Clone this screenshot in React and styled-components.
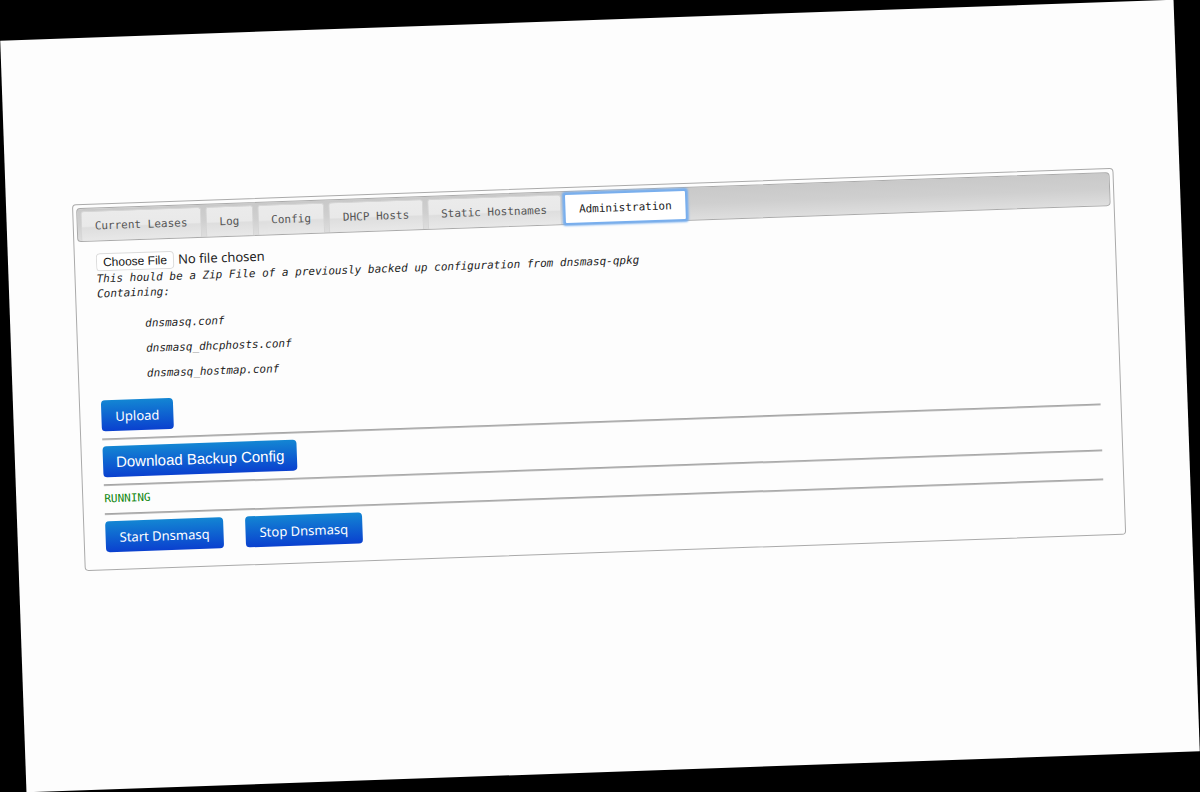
import React, { useState } from "react";
import styled, { createGlobalStyle, css } from "styled-components";

const mono = `"DejaVu Sans Mono", "Liberation Mono", monospace`;

const GlobalStyle = createGlobalStyle`
  * { box-sizing: border-box; }
  body {
    margin: 0;
    background: #000;
    overflow: hidden;
  }
`;

const Backdrop = styled.div`
  display: flex;
  min-height: 100vh;
  padding: 20px 13px;
  background: #000;
`;

const Sheet = styled.main`
  flex: 1;
  min-width: 0;
  padding: 166px 66px;
  background: #fdfdfd;
  color: #222;
  font: 11px/15px ${mono};
  transform: rotate(-2deg);
`;

const Panel = styled.section`
  padding: 3px;
  border: 1px solid #aaa;
  border-radius: 4px;
`;

const TabBar = styled.div`
  display: flex;
  gap: 4px;
  height: 34px;
  padding: 2px 3px 0;
  border: 1px solid #aaa;
  border-radius: 4px;
  background: linear-gradient(#c9c9c9, #cfcfcf 50%, #dedede);
`;

const Tab = styled.button`
  padding: 0 13px;
  border: 1px solid #d6d6d6;
  border-bottom: 0;
  border-radius: 4px 4px 0 0;
  background: linear-gradient(#ebebeb, #e9e9e9 50%, #dedede 55%, #e8e8e8);
  color: #555;
  font: 11px/15px ${mono};
  white-space: nowrap;
  outline: none;
  ${({ $active }) =>
    $active &&
    css`
      margin: 1px 0;
      padding: 0 14px;
      border: 0;
      border-radius: 1px;
      background: #fff;
      color: #212121;
      box-shadow: 0 0 2px 3px #77aeee;
    `}
`;

const Content = styled.div`
  padding: 11px 17px 14px 18px;
`;

const FileInput = styled.input`
  display: block;
  height: 19px;
  color: #222;
  font: 13px/18px "Noto Sans", sans-serif;

  &::file-selector-button {
    height: 18px;
    margin: 0 4px 0 0;
    padding: 0 6px;
    border: 1px solid #dcdcdc;
    border-radius: 4px;
    background: #fff;
    color: #111;
    font: 12px/16px "Liberation Sans", Arial, sans-serif;
  }
`;

const Hint = styled.label`
  display: block;
  font-style: italic;
`;

const FileList = styled.ul`
  margin: 11px 0 13px;
  padding: 0 0 0 47px;
  list-style: none;
  font-style: italic;
  line-height: 25px;
`;

const Rule = styled.hr`
  height: 2px;
  margin: 7px 0 6px;
  border: 0;
  background: linear-gradient(#9c9c9c, #c4c4c4);
`;

const ButtonRow = styled.div`
  display: flex;
  gap: 22px;
`;

const BlueButton = styled.button`
  height: 31px;
  padding: 0 14px;
  border: 0;
  border-radius: 4px;
  background: linear-gradient(#1386d3, #0a40cf);
  color: #fff;
  font: 13px/18px "Noto Sans", sans-serif;
  white-space: nowrap;
  ${({ $large }) =>
    $large &&
    css`
      padding: 0 13px;
      font: 15px/18px "Liberation Sans", Arial, sans-serif;
    `}
`;

const Status = styled.div`
  color: #0c850c;
  line-height: 14px;
`;

const tabs = ["Current Leases", "Log", "Config", "DHCP Hosts", "Static Hostnames", "Administration"];
const files = ["dnsmasq.conf", "dnsmasq_dhcphosts.conf", "dnsmasq_hostmap.conf"];

export default function App() {
  const [active, setActive] = useState("Administration");
  return (
    <Backdrop>
      <GlobalStyle />
      <Sheet>
        <Panel>
          <TabBar role="tablist">
            {tabs.map((name) => (
              <Tab
                key={name}
                type="button"
                role="tab"
                aria-selected={name === active}
                $active={name === active}
                onClick={() => setActive(name)}
              >
                {name}
              </Tab>
            ))}
          </TabBar>
          <Content role="tabpanel">
            <FileInput id="backup" type="file" />
            <Hint htmlFor="backup">
              This hould be a Zip File of a previously backed up configuration from dnsmasq-qpkg
              <br />
              Containing:
            </Hint>
            <FileList>
              {files.map((file) => (
                <li key={file}>{file}</li>
              ))}
            </FileList>
            <ButtonRow>
              <BlueButton type="button">Upload</BlueButton>
            </ButtonRow>
            <Rule />
            <ButtonRow>
              <BlueButton type="button" $large>Download Backup Config</BlueButton>
            </ButtonRow>
            <Rule />
            <Status role="status">RUNNING</Status>
            <Rule />
            <ButtonRow>
              <BlueButton type="button">Start Dnsmasq</BlueButton>
              <BlueButton type="button">Stop Dnsmasq</BlueButton>
            </ButtonRow>
          </Content>
        </Panel>
      </Sheet>
    </Backdrop>
  );
}
